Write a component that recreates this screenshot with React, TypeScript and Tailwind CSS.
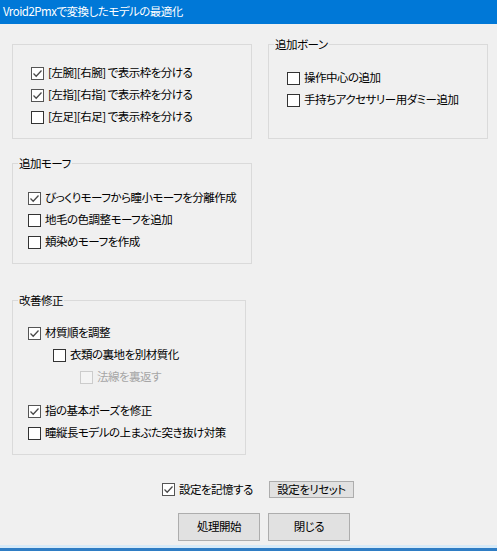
import type { ReactNode } from 'react'

function Box({ checked = false, disabled = false }: { checked?: boolean; disabled?: boolean }) {
  return (
    <span
      className={`flex h-[13px] w-[13px] shrink-0 items-center justify-center border ${
        disabled ? 'border-[#cccccc] bg-[#f4f4f4]' : checked ? 'border-[#555555] bg-white' : 'border-[#333333] bg-white'
      }`}
    >
      {checked && (
        <svg width="11" height="11" viewBox="0 0 11 11">
          <path d="M1.5 5.5 L4.2 8.2 L9.5 2.5" fill="none" stroke="#4a4a4a" strokeWidth="1.3" />
        </svg>
      )}
    </span>
  )
}

function Check({
  label,
  checked,
  disabled,
  indent = '',
}: {
  label: string
  checked?: boolean
  disabled?: boolean
  indent?: string
}) {
  return (
    <div className={`flex h-[22px] items-center gap-[4px] whitespace-nowrap ${indent}`}>
      <Box checked={checked} disabled={disabled} />
      <span className={disabled ? 'text-[#a6a6a6]' : 'text-black'}>{label}</span>
    </div>
  )
}

function Group({ title, className, children }: { title?: string; className: string; children: ReactNode }) {
  return (
    <div className={`relative border border-[#dadada] ${className}`}>
      {title && (
        <span className="absolute left-[5px] top-[-9px] whitespace-nowrap bg-[#f0f0f0] px-[1px] leading-[16px]">
          {title}
        </span>
      )}
      {children}
    </div>
  )
}

export default function App() {
  return (
    <div className="flex h-[551px] w-[497px] flex-col bg-[#f0f0f0] font-['Noto_Sans_CJK_JP','Noto_Sans',sans-serif] text-[11.5px] tracking-[-0.5px] text-black [font-feature-settings:'palt']">
      {/* Title bar */}
      <div className="flex h-[24px] items-center whitespace-nowrap bg-[#0078d7] pl-[3px] text-white">
        Vroid2Pmxで変換したモデルの最適化
      </div>

      <div className="flex-1 pl-[12px] pt-[20px]">
        <div className="flex gap-[16px]">
          <Group className="h-[95px] w-[240px] pl-[18px] pt-[17px]">
            <Check label="[左腕][右腕] で表示枠を分ける" checked />
            <Check label="[左指][右指] で表示枠を分ける" checked />
            <Check label="[左足][右足] で表示枠を分ける" />
          </Group>

          <Group title="追加ボーン" className="h-[95px] w-[220px] pl-[18px] pt-[22px]">
            <Check label="操作中心の追加" />
            <Check label="手持ちアクセサリー用ダミー追加" />
          </Group>
        </div>

        <Group title="追加モーフ" className="mt-[24px] h-[101px] w-[240px] pl-[15px] pt-[23px]">
          <Check label="びっくりモーフから瞳小モーフを分離作成" checked />
          <Check label="地毛の色調整モーフを追加" />
          <Check label="頬染めモーフを作成" />
        </Group>

        <Group title="改善修正" className="mt-[36px] h-[155px] w-[234px] pl-[15px] pt-[21px]">
          <Check label="材質順を調整" checked />
          <Check label="衣類の裏地を別材質化" indent="ml-[25px]" />
          <Check label="法線を裏返す" disabled indent="ml-[52px]" />
          <div className="mt-[12px]">
            <Check label="指の基本ポーズを修正" checked />
            <Check label="瞳縦長モデルの上まぶた突き抜け対策" />
          </div>
        </Group>

        {/* Remember settings */}
        <div className="mt-[26px] flex h-[17px] items-center whitespace-nowrap pl-[150px]">
          <Box checked />
          <span className="ml-[4px] w-[86px]">設定を記憶する</span>
          <button className="ml-[4px] h-[17px] w-[85px] whitespace-nowrap border border-[#adadad] bg-[#e1e1e1] leading-none">
            設定をリセット
          </button>
        </div>

        {/* Action buttons */}
        <div className="mt-[15px] flex gap-[8px] pl-[166px]">
          <button className="h-[28px] w-[82px] border border-[#adadad] bg-[#e1e1e1]">処理開始</button>
          <button className="h-[28px] w-[82px] border border-[#adadad] bg-[#e1e1e1]">閉じる</button>
        </div>
      </div>

      <div className="h-[3px] bg-[#d6eaf8]" />
      <div className="h-[3px] bg-[#2f7dc4]" />
    </div>
  )
}
